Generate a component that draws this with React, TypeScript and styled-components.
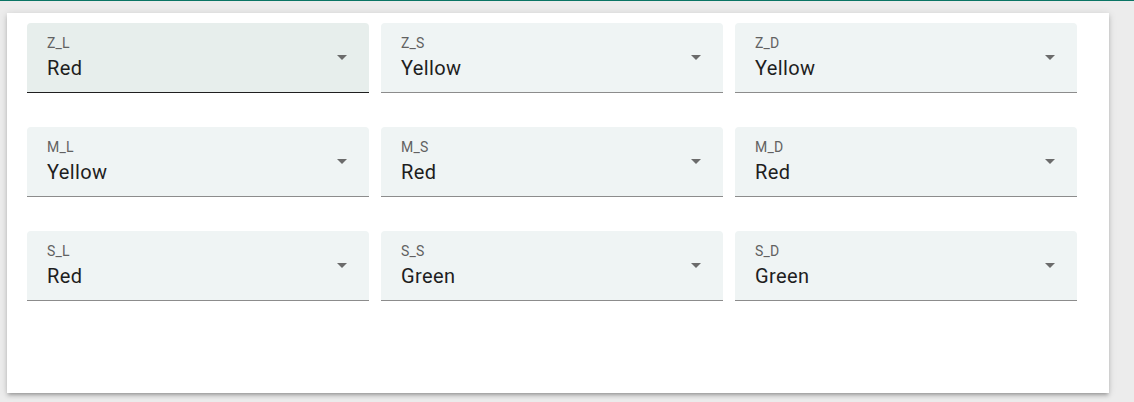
import React from "react";
import styled, { createGlobalStyle } from "styled-components";

const Global = createGlobalStyle`
  html, body { margin: 0; padding: 0; background: #ececec; }
  body { font-family: Roboto, "Noto Sans", Arial, sans-serif; }
  * { box-sizing: border-box; }
`;

const TopLine = styled.div`
  height: 1px;
  background: #0b7565;
`;

const Page = styled.div`
  padding: 12px 25px 9px 7px;
`;

const Card = styled.div`
  background: #fff;
  height: 380px;
  padding: 10px 20px 20px 20px;
  box-shadow: 0px 3px 3px -2px rgba(0, 0, 0, 0.2), 0px 3px 4px 0px rgba(0, 0, 0, 0.14),
    0px 1px 8px 0px rgba(0, 0, 0, 0.12);
`;

const Grid = styled.div`
  display: grid;
  grid-template-columns: repeat(3, 342px);
  column-gap: 12px;
  row-gap: 34px;
`;

const Field = styled.div<{ $hover?: boolean }>`
  position: relative;
  height: 70px;
  padding: 12px 20px 12px 20px;
  border-radius: 4px 4px 0 0;
  background: ${(p) => (p.$hover ? "#e7eeec" : "#eff4f4")};
  border-bottom: 1px solid ${(p) => (p.$hover ? "#1f1f1f" : "#8c8c8c")};
  display: flex;
  flex-direction: column;
  gap: 5px;
`;

const Label = styled.div`
  font-size: 14px;
  line-height: 16px;
  color: #616161;
  letter-spacing: 0.2px;
`;

const Value = styled.div`
  font-size: 20px;
  line-height: 24px;
  color: #1e1e1e;
  letter-spacing: 0.4px;
`;

const Arrow = styled.svg`
  position: absolute;
  right: 15px;
  top: 22px;
  width: 24px;
  height: 24px;
  fill: #6b6b6b;
`;

const fields: [string, string][] = [
  ["Z_L", "Red"],
  ["Z_S", "Yellow"],
  ["Z_D", "Yellow"],
  ["M_L", "Yellow"],
  ["M_S", "Red"],
  ["M_D", "Red"],
  ["S_L", "Red"],
  ["S_S", "Green"],
  ["S_D", "Green"],
];

export default function App() {
  return (
    <>
      <Global />
      <TopLine />
      <Page>
        <Card>
          <Grid>
            {fields.map(([l, v], i) => (
              <Field key={l} $hover={i === 0}>
                <Label>{l}</Label>
                <Value>{v}</Value>
                <Arrow viewBox="0 0 24 24">
                  <path d="M7 10l5 5 5-5z" />
                </Arrow>
              </Field>
            ))}
          </Grid>
        </Card>
      </Page>
    </>
  );
}
